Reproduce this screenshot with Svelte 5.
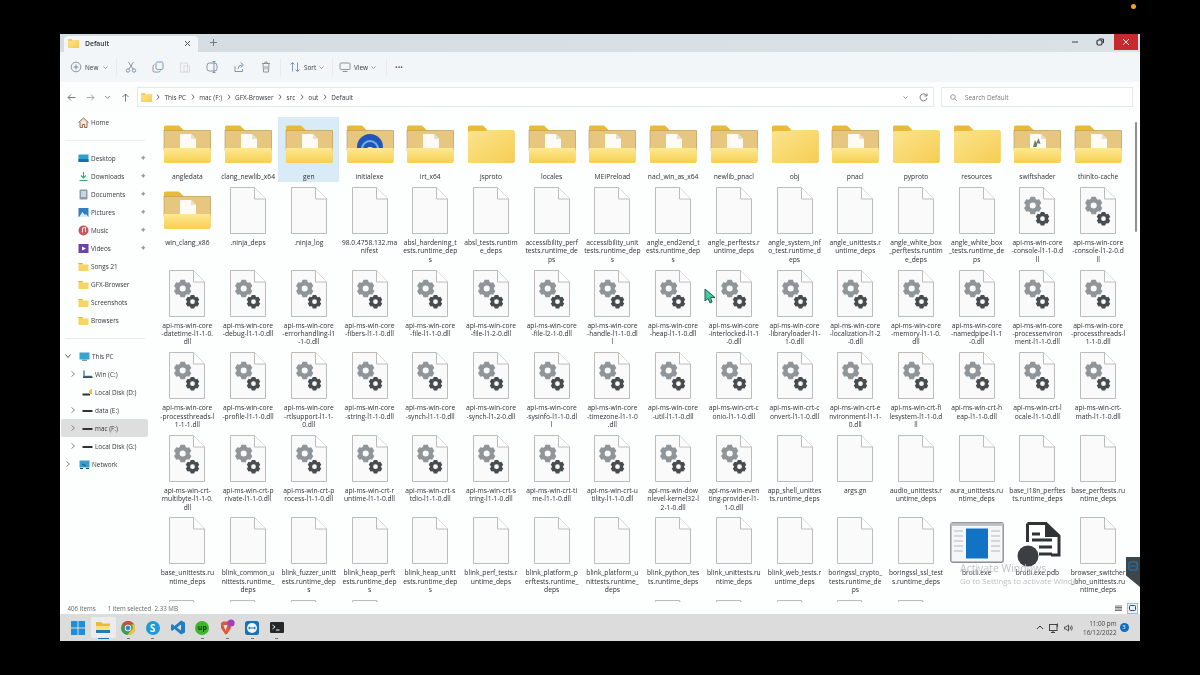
<script>
  const api = 'api-ms-win-core|';
  const crt = 'api-ms-win-crt-';
  const rows = [
    [['angledata','p'],['clang_newlib_x64','p'],['gen','p',true],['initialexe','c'],['irt_x64','p'],['jsproto','e'],['locales','p'],['MEIPreload','p'],['nacl_win_as_x64','p'],['newlib_pnacl','p'],['obj','e'],['pnacl','p'],['pyproto','e'],['resources','e'],['swiftshader','s'],['thinlto-cache','p']],
    [['win_clang_x86','p'],['.ninja_deps','f'],['.ninja_log','f'],['98.0.4758.132.ma|nifest','f'],['absl_hardening_t|ests.runtime_dep|s','f'],['absl_tests.runtim|e_deps','f'],['accessibility_perf|tests.runtime_de|ps','f'],['accessibility_unit|tests.runtime_dep|s','f'],['angle_end2end_t|ests.runtime_dep|s','f'],['angle_perftests.r|untime_deps','f'],['angle_system_inf|o_test.runtime_d|eps','f'],['angle_unittests.r|untime_deps','f'],['angle_white_box|_perftests.runtim|e_deps','f'],['angle_white_box|_tests.runtime_de|ps','f'],[api+'-console-l1-1-0.d|ll','g'],[api+'-console-l1-2-0.d|ll','g']],
    ['-datetime-l1-1-0.|dll','-debug-l1-1-0.dll','-errorhandling-l1|-1-0.dll','-fibers-l1-1-0.dll','-file-l1-1-0.dll','-file-l1-2-0.dll','-file-l2-1-0.dll','-handle-l1-1-0.dl|l','-heap-l1-1-0.dll','-interlocked-l1-1|-0.dll','-libraryloader-l1-|1-0.dll','-localization-l1-2|-0.dll','-memory-l1-1-0.|dll','-namedpipe-l1-1|-0.dll','-processenviron|ment-l1-1-0.dll','-processthreads-l|1-1-0.dll'].map((s) => [api + s, 'g']),
    [...['-processthreads-l|1-1-1.dll','-profile-l1-1-0.dll','-rtlsupport-l1-1-|0.dll','-string-l1-1-0.dll','-synch-l1-1-0.dll','-synch-l1-2-0.dll','-sysinfo-l1-1-0.dl|l','-timezone-l1-1-0|.dll','-util-l1-1-0.dll'].map((s) => [api + s, 'g']),
      ...['c|onio-l1-1-0.dll','c|onvert-l1-1-0.dll','e|nvironment-l1-1-|0.dll','fi|lesystem-l1-1-0.d|ll','h|eap-l1-1-0.dll','l|ocale-l1-1-0.dll','|math-l1-1-0.dll'].map((s) => [crt + s, 'g'])],
    [...['|multibyte-l1-1-0.|dll','p|rivate-l1-1-0.dll','p|rocess-l1-1-0.dll','r|untime-l1-1-0.dll','s|tdio-l1-1-0.dll','s|tring-l1-1-0.dll','ti|me-l1-1-0.dll','u|tility-l1-1-0.dll'].map((s) => [crt + s, 'g']),
      ['api-ms-win-dow|nlevel-kernel32-l|2-1-0.dll','g'],['api-ms-win-even|ting-provider-l1-|1-0.dll','g'],['app_shell_unittes|ts.runtime_deps','f'],['args.gn','f'],['audio_unittests.r|untime_deps','f'],['aura_unittests.ru|ntime_deps','f'],['base_i18n_perftes|ts.runtime_deps','f'],['base_perftests.ru|ntime_deps','f']],
    [['base_unittests.ru|ntime_deps','f'],['blink_common_u|nittests.runtime_|deps','f'],['blink_fuzzer_unitt|ests.runtime_dep|s','f'],['blink_heap_perft|ests.runtime_dep|s','f'],['blink_heap_unitt|ests.runtime_dep|s','f'],['blink_perf_tests.r|untime_deps','f'],['blink_platform_p|erftests.runtime_|deps','f'],['blink_platform_u|nittests.runtime_|deps','f'],['blink_python_tes|ts.runtime_deps','f'],['blink_unittests.ru|ntime_deps','f'],['blink_web_tests.r|untime_deps','f'],['boringssl_crypto_|tests.runtime_de|ps','f'],['boringssl_ssl_test|s.runtime_deps','f'],['brotli.exe','x'],['brotli.exe.pdb','d'],['browser_switcher|_bho_unittests.ru|ntime_deps','f']],
    ['f','f','f','f','n','n','n','n','f','f','f','f','f','n','n','n'].map((k) => ['', k])
  ];
  const items = rows.flat();

  function gear(cx, cy, r, teeth = 6) {
    const pts = [];
    const step = (Math.PI * 2) / teeth;
    for (let i = 0; i < teeth; i++) {
      const a = i * step - Math.PI / 2;
      const w = step * 0.24;
      const rin = r * 0.8;
      [[a - step / 2 + w * 0.4, rin], [a - w, r], [a + w, r], [a + step / 2 - w * 0.4, rin]].forEach(([t, q]) => {
        pts.push(`${(cx + q * Math.cos(t)).toFixed(2)} ${(cy + q * Math.sin(t)).toFixed(2)}`);
      });
    }
    const h = r * 0.34;
    return `M${pts.join('L')}Z M${cx - h} ${cy}a${h} ${h} 0 1 0 ${2 * h} 0a${h} ${h} 0 1 0 ${-2 * h} 0Z`;
  }
  const bigGear = gear(13.7, 18.5, 9);
  const smallGear = gear(23.5, 31.7, 7);

  const pinned = [['Desktop','desk'],['Downloads','down'],['Documents','docs'],['Pictures','pics'],['Music','music'],['Videos','vid']];
  const quick = ['Songs 21','GFX-Browser','Screenshots','Browsers'];
  const drives = [['Win (C:)','win'],['Local Disk (D:)','lock'],['data (E:)','drv'],['mac (F:)','drv',true],['Local Disk (G:)','drv']];
  const crumbs = ['This PC','mac (F:)','GFX-Browser','src','out','Default'];
</script>

{#snippet folderIcon(kind, w = 48, h = 38)}
  <svg class="ic" width={w} height={h} viewBox="0 0 48 38">
    <defs>
      <linearGradient id="fy" x1="0" y1="0" x2="1" y2="1"><stop offset="0" stop-color="#fbe48e"/><stop offset="1" stop-color="#f6cd52"/></linearGradient>
      <linearGradient id="ff" x1="0" y1="0" x2="0" y2="1"><stop offset="0" stop-color="#fde992"/><stop offset="1" stop-color="#f6cf50"/></linearGradient>
    </defs>
    <path d="M1 37V2Q1 .5 2.500 .5H16l5 5H46Q47.500 5.500 47.500 7V36Q47.500 37.500 46 37.500H2Z" fill="#e9ba38"/>
    {#if kind === 'e'}
      <path d="M1 8Q1 6 3 6H17l4-1H45.500Q47.500 5 47.500 7V36Q47.500 38 45.500 38H3Q1 38 1 36Z" fill="url(#fy)"/>
    {:else}
      <rect x="1" y="5.500" width="46.500" height="20" fill="#e7c67f" stroke="#b39a62" stroke-width=".6"/>
      {#if kind === 'p' || kind === 's'}
        <path d="M17 9H28l5 5V24H17Z" fill="#fdfbf4"/>
        <path d="M28 9v5h5" fill="#e4e0d2"/>
      {/if}
      {#if kind === 's'}
        <path d="M20 22l2-7 1.500 3 2-5 2 6-3-1-1 4Z" fill="#6d7b6a"/>
      {/if}
      {#if kind === 'c'}
        <circle cx="24" cy="22" r="13" fill="#2156b8"/>
        <circle cx="24" cy="24" r="8" fill="none" stroke="#6fb2e6" stroke-width="2"/>
        <circle cx="24" cy="26" r="4" fill="#dfeaf4"/>
      {/if}
      <path d="M1 23H47.500V36Q47.500 38 45.500 38H3Q1 38 1 36Z" fill="url(#ff)"/>
    {/if}
  </svg>
{/snippet}

{#snippet fileIcon(withGear)}
  <svg class="ic file" width="36" height="47" viewBox="0 0 36 47">
    <path d="M.5.5H24.500L35.500 12V46.500H.5Z" fill="#fafafa" stroke="#bcbcbc"/>
    <path d="M24.500.5V12H35.500" fill="#fff" stroke="#bcbcbc"/>
    {#if withGear}
      <path d={bigGear} fill="#8f9599" fill-rule="evenodd"/>
      <path d={smallGear} fill="#484c4f" fill-rule="evenodd"/>
    {/if}
  </svg>
{/snippet}

{#snippet sideIcon(n)}
  <svg class="ic" width="11" height="11" viewBox="0 0 11 11">
    {#if n === 'home'}
      <path d="M.5 5.500 5.500 1l5 4.500M2 5v5.500h2.500V7.500h2v3H9V5" fill="#f3e3d3" stroke="#9a6a52"/>
    {:else if n === 'desk'}
      <rect x=".5" y="1.500" width="10" height="7.500" fill="#2f9fd0"/><rect x=".5" y="6" width="10" height="3" fill="#1e6ea8"/>
    {:else if n === 'down'}
      <path d="M5.500 1v6M3 4.500l2.500 2.500L8 4.500M1.500 9.500h8" fill="none" stroke="#3aa76d" stroke-width="1.100"/>
    {:else if n === 'docs'}
      <rect x="1.500" y=".5" width="8" height="10" rx="1" fill="#8b9daa"/><rect x="3" y="2" width="5" height="6" fill="#c9d6de"/>
    {:else if n === 'pics'}
      <rect x=".5" y="1" width="10" height="9" fill="#2f7fc2"/><path d="M1 10 4.500 5l2.500 3 1-1 2.500 3Z" fill="#d6ecf7"/>
    {:else if n === 'music'}
      <circle cx="5.500" cy="5.500" r="5" fill="#c8565c"/><path d="M4.500 7.500V3l3-.5V7" fill="none" stroke="#fff" stroke-width=".9"/>
    {:else if n === 'vid'}
      <rect x=".5" y="1" width="10" height="9" fill="#6c42b0"/><path d="M4 3.500 8 5.500 4 7.500Z" fill="#fff"/>
    {:else if n === 'fold'}
      <path d="M.5 2H4l1 1.500h5.500V10H.5Z" fill="#f6d566"/><path d="M.5 2H4l1 1H.5Z" fill="#e2ae30"/>
    {:else if n === 'pc'}
      <rect x=".5" y="1.500" width="10" height="7" fill="#35a5cf"/><rect x="3" y="8.500" width="5" height="1.500" fill="#7c99a8"/>
    {:else if n === 'net'}
      <rect x=".5" y="1.500" width="10" height="7" fill="#3a9ccc"/><path d="M1 9.500h3M7 9.500h3M3 5l4 2" stroke="#14506e"/>
    {:else if n === 'win'}
      <path d="M2 1.500v6h8" fill="none" stroke="#3c7db5" stroke-width="1.400"/><rect x="1" y="7.500" width="9.500" height="1.500" fill="#444"/>
    {:else if n === 'lock'}
      <rect x=".5" y="6.500" width="7.500" height="2" fill="#333"/><path d="M7 7V3.500l3-2V7Z" fill="#e6c63f"/>
    {:else}
      <rect x=".5" y="5" width="10" height="2" fill="#333"/>
    {/if}
  </svg>
{/snippet}

{#snippet tool(n)}
  <svg class="ic" width="12" height="12" viewBox="0 0 12 12" fill="none" stroke="#777c80" stroke-width=".8">
    {#if n === 'new'}
      <circle cx="6" cy="6" r="4.800"/><path d="M6 3.500v5M3.500 6h5" stroke="#4a7ea8"/>
    {:else if n === 'cut'}
      <circle cx="3" cy="9.500" r="1.700" stroke="#5a83ab"/><circle cx="9" cy="9.500" r="1.700" stroke="#5a83ab"/><path d="M4 8 8.500 1M8 8 3.500 1"/>
    {:else if n === 'copy'}
      <rect x="4" y="1" width="7" height="7.500" rx="1.500" stroke="#5a83ab"/><path d="M2.500 3.500Q1 4 1 5.500v4Q1 11 2.500 11h4Q8 11 8.500 9.500"/>
    {:else if n === 'paste'}
      <rect x="1.500" y="2" width="7" height="9" stroke="#d2d5d7"/><rect x="5" y="5" width="5.500" height="6" stroke="#d2d5d7"/>
    {:else if n === 'rename'}
      <rect x="1" y="2" width="10" height="8" rx="2.500"/><path d="M8 .5v11M6.500.5h3M6.500 11.500h3" stroke="#5a83ab"/>
    {:else if n === 'share'}
      <path d="M2 5v5.500h7.500V8"/><path d="M5 8q0-4 4-4M7.500 1.500 10.500 4 7.500 6.500" stroke="#5a83ab"/>
    {:else if n === 'trash'}
      <path d="M2 2.500h8M3 2.500l.5 8.500h5L9 2.500M4.500 2.500 5 1h2l.5 1.500M5 5v3.500M7 5v3.500"/>
    {:else if n === 'sort'}
      <path d="M3.500 10.500v-9M1.500 3.500l2-2 2 2M8.500 1.500v9M6.500 8.500l2 2 2-2" stroke="#5a83ab"/>
    {:else if n === 'view'}
      <rect x="1" y="2" width="10" height="6.500" rx="1"/><path d="M3.500 10.500h5"/>
    {/if}
  </svg>
{/snippet}

{#snippet chev()}
  <svg class="ic chev" width="5" height="5" viewBox="0 0 5 5" fill="none" stroke="#999"><path d="M.5 1.500 2.500 3.500 4.500 1.500"/></svg>
{/snippet}
{#snippet crumbSep()}
  <svg class="ic" width="4" height="6" viewBox="0 0 4 6" fill="none" stroke="#666"><path d="M1 .5 3 3 1 5.500"/></svg>
{/snippet}

<div class="page">
  <div class="window">
    <header class="titlebar">
      <div class="tab">
        {@render folderIcon('e', 11, 9)}
        <span class="tabname">Default</span>
        <svg class="ic tabx" width="7" height="7" viewBox="0 0 7 7" stroke="#555"><path d="M1 1 6 6M6 1 1 6"/></svg>
      </div>
      <svg class="ic plus" width="7" height="7" viewBox="0 0 7 7" stroke="#777"><path d="M3.500 0v7M0 3.500h7"/></svg>
      <div class="winctl">
        <svg class="ic" width="8" height="8" viewBox="0 0 8 8" stroke="#444"><path d="M1 4h6"/></svg>
        <svg class="ic" width="8" height="8" viewBox="0 0 8 8" fill="none" stroke="#333" stroke-width="1.200"><rect x="1" y="2" width="5" height="5" rx="1.500"/><path d="M3 1h3.500Q7.500 1 7.500 2v3"/></svg>
        <div class="close"><svg class="ic" width="8" height="8" viewBox="0 0 8 8" stroke="#fbe6e6"><path d="M1 1 7 7M7 1 1 7"/></svg></div>
      </div>
    </header>

    <div class="toolbar">
      <div class="tgroup newg">{@render tool('new')}<span>New</span>{@render chev()}</div>
      <i class="sep"></i>
      <div class="tgroup iconsg">
        {#each ['cut','copy','paste','rename','share','trash'] as n}
          <span class="ticon">{@render tool(n)}</span>
        {/each}
      </div>
      <i class="sep"></i>
      <div class="tgroup sortg">{@render tool('sort')}<span>Sort</span>{@render chev()}</div>
      <i class="sep"></i>
      <div class="tgroup viewg">{@render tool('view')}<span>View</span>{@render chev()}</div>
      <i class="sep"></i>
      <span class="dots">•••</span>
    </div>

    <div class="addr">
      <div class="nav">
        <svg class="ic" width="9" height="9" viewBox="0 0 9 9" fill="none" stroke="#777"><path d="M8.500 4.500H1M4 1.500l-3 3 3 3"/></svg>
        <svg class="ic" width="9" height="9" viewBox="0 0 9 9" fill="none" stroke="#aaa"><path d="M.5 4.500H8M5 1.500l3 3-3 3"/></svg>
        <svg class="ic" width="7" height="9" viewBox="0 0 7 9" fill="none" stroke="#888"><path d="M1 3l2.500 2.500L6 3"/></svg>
        <svg class="ic" width="9" height="9" viewBox="0 0 9 9" fill="none" stroke="#777"><path d="M4.500 8.500V1M1.500 4l3-3 3 3"/></svg>
      </div>
      <div class="pathbox">
        {@render folderIcon('e', 11, 9)}
        {#each crumbs as c}
          {@render crumbSep()}<span>{c}</span>
        {/each}
        <span class="grow"></span>
        {@render chev()}
        <svg class="ic refresh" width="9" height="9" viewBox="0 0 9 9" fill="none" stroke="#777"><path d="M7.500 2.500A3.500 3.500 0 1 0 8 5M8 .5v2.500H5.500"/></svg>
      </div>
      <div class="search">
        <svg class="ic" width="7" height="7" viewBox="0 0 7 7" fill="none" stroke="#999"><circle cx="3" cy="3" r="2.300"/><path d="M4.700 4.700 6.800 6.800"/></svg>
        <span>Search Default</span>
      </div>
    </div>

    <div class="main">
      <nav class="side">
        <div class="srow home">{@render sideIcon('home')}<span>Home</span></div>
        <hr />
        {#each pinned as [label, ic]}
          <div class="srow">{@render sideIcon(ic)}<span>{label}</span>
            <svg class="ic pin" width="6" height="6" viewBox="0 0 6 6" fill="#999"><path d="M3 .5 5.500 3 4 3.500 3.500 5 1 2.500 2.500 2ZM1.500 3.500 .5 5.500"/></svg>
          </div>
        {/each}
        {#each quick as label}
          <div class="srow">{@render sideIcon('fold')}<span>{label}</span></div>
        {/each}
        <hr />
        <div class="srow pc">
          <svg class="ic arrow" width="6" height="6" viewBox="0 0 6 6" fill="none" stroke="#555"><path d="M.5 1.500 3 4.500 5.500 1.500"/></svg>
          {@render sideIcon('pc')}<span>This PC</span>
        </div>
        {#each drives as [label, ic, sel]}
          <div class="srow drive" class:sel>
            {#if label !== 'Local Disk (D:)'}
              <svg class="ic arrow" width="6" height="6" viewBox="0 0 6 6" fill="none" stroke="#888"><path d="M1.500 .5 4.500 3 1.500 5.500"/></svg>
            {:else}
              <span class="arrow blank"></span>
            {/if}
            {@render sideIcon(ic)}<span>{label}</span>
          </div>
        {/each}
        <div class="srow pc">
          <svg class="ic arrow" width="6" height="6" viewBox="0 0 6 6" fill="none" stroke="#888"><path d="M1.500 .5 4.500 3 1.500 5.500"/></svg>
          {@render sideIcon('net')}<span>Network</span>
        </div>
      </nav>

      <div class="grid">
        {#each items as [name, kind, selected]}
          <div class="cell" class:selected>
            <div class="icon">
              {#if 'pecs'.includes(kind)}
                <span class="fwrap">{@render folderIcon(kind)}</span>
              {:else if kind === 'f' || kind === 'g'}
                <span class="filewrap">{@render fileIcon(kind === 'g')}</span>
              {:else if kind === 'x'}
                <svg class="ic exe" width="54" height="41" viewBox="0 0 54 41">
                  <rect x=".8" y=".8" width="52.400" height="39.400" rx="2" fill="#f4f6f7" stroke="#8b9094" stroke-width="1.400"/>
                  <rect x=".8" y=".8" width="52.400" height="3" fill="#b9bdc0"/>
                  <rect x="16" y="6.500" width="22" height="30" fill="#1273c4"/>
                  <path d="M4 9h9M4 14h9M4 19h9M4 24h9M4 29h9M41 9h9M41 14h9M41 19h9M41 24h9M41 29h9" stroke="#b5b9bc"/>
                </svg>
              {:else if kind === 'd'}
                <svg class="ic pdb" width="44" height="45" viewBox="0 0 44 45">
                  <path d="M10.500 1.500H29L42 14V33H34M10.500 1.500V20" fill="#fff" stroke="#2f3336" stroke-width="3"/>
                  <path d="M28 1 43 15H28Z" fill="#2f3336"/>
                  <path d="M15 12h8M15 18h20M22 25h13M22 32h13" stroke="#2f3336" stroke-width="3"/>
                  <circle cx="11" cy="34" r="10.500" fill="#3c3f42"/>
                </svg>
              {/if}
            </div>
            {#if name}
              <div class="label">
                {#each name.split('|') as line}
                  <span>{line}</span>
                {/each}
              </div>
            {/if}
          </div>
        {/each}
      </div>

      <div class="rail"><div class="thumb"></div></div>
    </div>

    <footer class="status">
      <span>406 items</span>
      <span class="selinfo">1 item selected&nbsp; 2.33 MB</span>
      <span class="grow"></span>
      <svg class="ic" width="7" height="7" viewBox="0 0 7 7" stroke="#777"><path d="M0 1h7M0 2.500h7M0 4h7M0 5.500h7"/></svg>
      <div class="viewsel"><svg class="ic" width="7" height="7" viewBox="0 0 7 7" fill="none" stroke="#444"><rect x=".5" y=".5" width="6" height="5" rx="1"/></svg></div>
    </footer>

    <div class="taskbar">
      <div class="tasks">
        <span class="tk"><svg class="ic" width="14" height="14" viewBox="0 0 14 14"><g fill="#1d8fd8"><rect width="6.500" height="6.500" rx=".6"/><rect x="7.500" width="6.500" height="6.500" rx=".6"/><rect y="7.500" width="6.500" height="6.500" rx=".6"/><rect x="7.500" y="7.500" width="6.500" height="6.500" rx=".6"/></g></svg></span>
        <span class="tk active"><svg class="ic" width="14" height="13" viewBox="0 0 14 13"><path d="M0 1h5l1.500 1.500H14V6H0Z" fill="#e8b93a"/><rect y="5" width="14" height="4" fill="#fbe08a"/><rect y="9" width="14" height="3" fill="#1f7fb5"/></svg></span>
        <span class="tk dot"><svg class="ic" width="14" height="14" viewBox="0 0 14 14"><circle cx="7" cy="7" r="7" fill="#3f9b4f"/><path d="M7 0a7 7 0 0 1 6.100 3.500H7a3.500 3.500 0 0 0-3.300 2.400L1.600 2.600A7 7 0 0 1 7 0Z" fill="#d9453a"/><path d="M13.100 3.500A7 7 0 0 1 6.500 14l3.500-4.500a3.500 3.500 0 0 0 .2-6Z" fill="#f2c53a"/><circle cx="7" cy="7" r="3.200" fill="#fff"/><circle cx="7" cy="7" r="2.400" fill="#3d82d6"/></svg></span>
        <span class="tk dot skype"><b>S</b></span>
        <span class="tk"><svg class="ic" width="14" height="15" viewBox="0 0 14 15"><path d="M10 .5 14 2.500V12.500L10 14.500 3.500 9 1 11 0 10V5L1 4 3.500 6 10 .5ZM10 4.500 6 7.500 10 10.500Z" fill="#1f7fc4"/></svg></span>
        <span class="tk dot upwork"><b>up</b></span>
        <span class="tk dot"><svg class="ic" width="17" height="17" viewBox="0 0 17 17"><path d="M2 4 4 2.500H9L11 4 12 9 8 15 6.500 15.500 6 15 2 9Z" fill="#e0553a"/><path d="M4.500 6H8.500L6.500 12Z" fill="#f5e7df"/><circle cx="12" cy="4" r="3.600" fill="#a23eb5"/></svg></span>
        <span class="tk dot"><svg class="ic" width="14" height="14" viewBox="0 0 14 14"><rect width="14" height="14" rx="2.500" fill="#1672b8"/><circle cx="7" cy="7" r="5" fill="#eef6fb"/><path d="M3 7l2-1.500v1h4v-1L11 7 9 8.500v-1H5v1Z" fill="#1672b8"/></svg></span>
        <span class="tk dot"><svg class="ic" width="14" height="11" viewBox="0 0 14 11"><rect width="14" height="11" rx="1" fill="#24282b"/><path d="M2.500 3 5 5 2.500 7M6 8h3.500" stroke="#f2f2f2" fill="none"/></svg></span>
      </div>
      <div class="tray">
        <svg class="ic" width="8" height="5" viewBox="0 0 8 5" fill="none" stroke="#333"><path d="M1 4 4 1 7 4"/></svg>
        <svg class="ic" width="10" height="10" viewBox="0 0 10 10" fill="none" stroke="#444"><rect x=".5" y="1.500" width="7.500" height="6"/><path d="M4 7.500V9.500M2 9.500H6M8.500 .5V4"/></svg>
        <svg class="ic" width="9" height="8" viewBox="0 0 9 8" fill="none" stroke="#555"><path d="M.5 3H2L4.500 1V7L2 5H.5ZM6 2.500Q7 4 6 5.500M7.500 1.500Q9 4 7.500 6.500"/></svg>
        <div class="clock"><span>11:00 pm</span><span>16/12/2022</span></div>
        <span class="badge">3</span>
      </div>
    </div>
  </div>

  <!-- overlays that sit on the captured screen -->
  <i class="recdot"></i>
  <svg class="cursor" width="12" height="16" viewBox="0 0 12 16"><path d="M1 1V13L4 10.500 6 15 8 14 6.500 9.500H11Z" fill="#45c9a0" stroke="#1f5d50"/></svg>
  <div class="activate"><div class="a1">Activate Windows</div><div class="a2">Go to Settings to activate Windows.</div></div>
  <div class="sidetab"><svg width="10" height="10" viewBox="0 0 10 10" fill="none" stroke="#2c6f9e" stroke-width="1.300"><rect x=".8" y=".8" width="8.400" height="8.400" rx="2.500"/><path d="M2.500 5h5"/></svg></div>
</div>

<style>
  :global(body) { margin: 0; background: #000; }
  .page { position: relative; width: 1200px; height: 675px; background: #000; overflow: hidden; padding: 34px 60px 34px; box-sizing: border-box; font-family: "Open Sans", "Noto Sans", sans-serif; color: #34373a; font-size: 6.400px; }
  .window { width: 1080px; height: 607px; background: #fdfefe; display: flex; flex-direction: column; filter: blur(.45px); overflow: hidden; }
  .ic { display: block; flex: none; }
  .grow { flex: 1; }

  .titlebar { height: 18px; flex: none; display: flex; align-items: flex-end; background: linear-gradient(90deg, #d5dde2, #dbe2e6); }
  .tab { width: 134px; height: 16px; margin-left: 4px; box-sizing: border-box; padding: 0 7px 2px 4px; background: #f2f6f8; border-radius: 4px 4px 0 0; display: flex; align-items: center; gap: 6px; }
  .tabname { font-weight: 600; flex: 1; font-size: 6.800px; }
  .plus { margin: 0 0 6px 12px; }
  .winctl { margin-left: auto; align-self: flex-start; display: flex; align-items: center; height: 15px; gap: 17px; }
  .close { width: 24px; height: 16px; margin: 0 2px 0 -7px; background: #c62a2f; display: flex; align-items: center; justify-content: center; }

  .toolbar { height: 30px; flex: none; background: #f3f6f8; display: flex; align-items: center; box-sizing: border-box; padding-left: 10px; }
  .tgroup { display: flex; align-items: center; gap: 3px; }
  .sep { width: 1px; height: 18px; background: #e9ebed; flex: none; }
  .newg { width: 46px; }
  .newg span { margin-right: 2px; }
  .iconsg { gap: 0; width: 163px; }
  .ticon { width: 27px; display: flex; justify-content: center; }
  .sortg { width: 51px; padding-left: 8px; box-sizing: border-box; }
  .viewg { width: 53px; padding-left: 6px; box-sizing: border-box; }
  .dots { margin-left: 8px; font-size: 7px; color: #555; }

  .addr { height: 30px; flex: none; display: flex; align-items: center; background: #fcfdfd; padding-left: 2px; }
  .nav { display: flex; width: 75px; padding: 0 7px 0 5px; box-sizing: border-box; justify-content: space-between; align-items: center; }
  .pathbox { width: 797px; height: 20px; box-sizing: border-box; border: 1px solid #e6e8ea; background: #fff; display: flex; align-items: center; gap: 4.500px; padding: 0 5px 0 2.500px; }
  .refresh { margin-left: 7px; }
  .search { width: 192px; height: 20px; box-sizing: border-box; border: 1px solid #e6e8ea; margin-left: 7px; display: flex; align-items: center; gap: 8px; padding-left: 8px; color: #777; background: #fff; }

  .main { flex: 1; min-height: 0; display: flex; }
  .side { width: 97px; flex: none; box-sizing: border-box; padding-top: 1px; }
  .srow { height: 18px; display: flex; align-items: center; padding-left: 18px; gap: 2px; position: relative; }
  .pin { position: absolute; left: 80px; top: 6px; }
  .side hr { border: 0; border-top: 1px solid #e9ebec; margin: 9px 12px 8px 5px; height: 0; }
  .pc { padding-left: 5px; }
  .pc .arrow { margin-right: 6px; }
  .drive { padding-left: 9px; width: 87px; margin-left: 1px; box-sizing: border-box; }
  .drive .arrow { margin-right: 4px; }
  .arrow.blank { display: block; width: 6px; flex: none; }
  .sel { background: #dedede; border-radius: 2px; }

  .grid { width: 971.700px; flex: none; display: grid; grid-template-columns: repeat(16, 60.730px); grid-template-rows: 66px repeat(6, 82.600px); padding-top: 5px; height: 490px; box-sizing: border-box; overflow: hidden; }
  .cell { box-sizing: border-box; min-width: 0; }
  .selected { background: #d9ebf6; margin-bottom: 1px; }
  .icon { height: 56px; display: flex; justify-content: center; position: relative; }
  .fwrap { margin-top: 8px; }
  .filewrap { margin-top: 4px; }
  .exe { margin-top: 8.500px; }
  .pdb { margin: 8.500px 0 0 0; position: relative; left: 2px; }
  .label { text-align: center; line-height: 8.400px; font-size: 6.700px; white-space: nowrap; color: #2c2f33; }
  .label span { display: block; }

  .rail { flex: 1; display: flex; justify-content: center; padding-top: 10px; padding-left: 3px; }
  .thumb { width: 2.500px; height: 110px; background: #8d8f91; border-radius: 2px; }

  .status { height: 12px; flex: none; display: flex; align-items: center; padding: 0 2px 0 7.500px; color: #666; background: #fdfefe; font-size: 6.200px; }
  .selinfo { margin-left: 12px; }
  .viewsel { margin-left: 5px; width: 11px; height: 11px; box-sizing: border-box; border: 1px solid #8cc6e6; background: #e6f2f9; display: flex; align-items: center; justify-content: center; }

  .taskbar { height: 27px; flex: none; background: #dcdcdc; display: flex; align-items: center; }
  .tasks { display: flex; padding-left: 6px; }
  .tk { width: 24.800px; height: 21px; display: flex; align-items: center; justify-content: center; position: relative; }
  .tk.active { background: #ececec; border-radius: 2px; }
  .tk.active::after { content: ""; position: absolute; left: 7px; right: 7px; bottom: -1px; height: 1.500px; background: #1d6ea6; }
  .dot::after { content: ""; position: absolute; left: 11px; width: 3px; bottom: -1px; height: 1px; background: #777; }
  .skype b { width: 14px; height: 14px; border-radius: 50%; background: #1d9bd7; color: #fff; font-size: 10px; line-height: 14px; text-align: center; font-weight: 700; }
  .upwork b { width: 14px; height: 14px; border-radius: 50%; background: #3fb52e; color: #14380f; font-size: 7px; line-height: 13px; text-align: center; font-weight: 700; }
  .tray { margin-left: auto; display: flex; align-items: center; gap: 5px; padding-right: 11.500px; }
  .clock { display: flex; flex-direction: column; align-items: flex-end; line-height: 9px; font-size: 6.300px; margin-left: 5px; color: #444; }
  .badge { width: 9px; height: 9px; border-radius: 50%; background: #0f6cc2; color: #fff; font-size: 6px; line-height: 9px; text-align: center; margin-left: -2px; }

  .recdot { position: absolute; left: 1131px; top: 4px; width: 5px; height: 5px; border-radius: 50%; background: #f0a030; }
  .cursor { position: absolute; left: 704px; top: 288px; }
  .activate { position: absolute; left: 960px; top: 561px; width: 117px; overflow: hidden; white-space: nowrap; color: #bec1c3; filter: blur(.4px); pointer-events: none; }
  .a1 { font-size: 10.500px; line-height: 14px; }
  .a2 { font-size: 7.900px; line-height: 12px; }
  .sidetab { position: absolute; left: 1126px; top: 557px; width: 14px; height: 30px; background: #3b474c; clip-path: polygon(0 0, 100% 0, 100% 100%, 0 62%); display: flex; justify-content: center; padding-top: 4px; box-sizing: border-box; filter: blur(.35px); }
</style>
